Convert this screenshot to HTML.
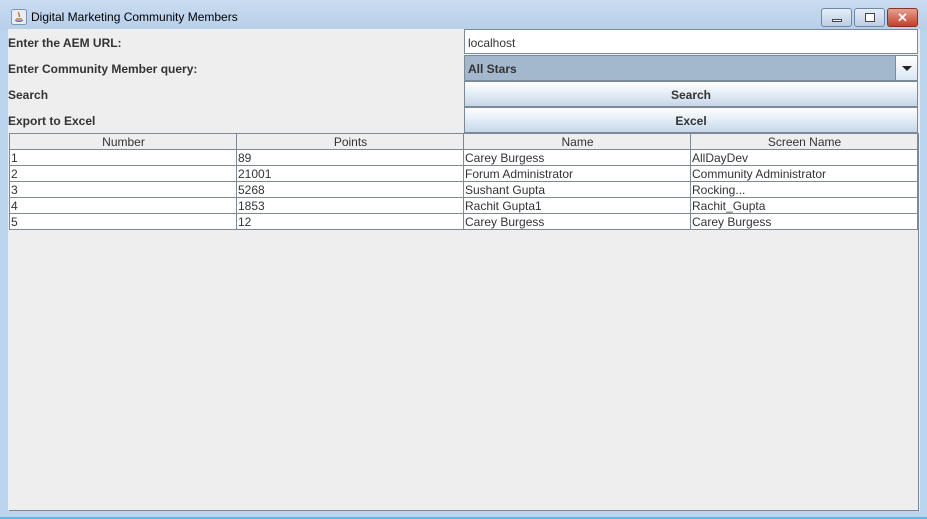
<!DOCTYPE html>
<html><head><meta charset="utf-8"><style>
*{margin:0;padding:0;box-sizing:border-box}
body{width:927px;height:519px;overflow:hidden;background:#bcd5ee;font-family:"Liberation Sans",sans-serif;position:relative}
.title{position:absolute;left:0;top:0;width:927px;height:30px;background:linear-gradient(#c9dcf0,#b7cfe9)}
.title span{position:absolute;left:31px;top:10px;font-size:12px;color:#000}
.frame{position:absolute;left:8px;top:29px;width:912px;height:482px;background:#eeeeee}
.lbl{position:absolute;left:8px;font-size:12px;font-weight:bold;color:#333}
.tf{position:absolute;left:464px;top:29px;width:454px;height:25px;background:#fff;border:1px solid #7a8a99;font-size:12px;padding:6px 0 0 3px;color:#333}
.combo{position:absolute;left:464px;top:55px;width:454px;height:26px;background:#a3b8cc;border:1px solid #7a8a99;font-size:12px;font-weight:bold;color:#333;padding:6px 0 0 3px}
.combo .arr{position:absolute;right:0;top:0;width:22px;height:24px;background:linear-gradient(#fff,#dce7f2);border-left:1px solid #7a8a99}
.combo .arr:after{content:"";position:absolute;left:6px;top:10px;border-left:5px solid transparent;border-right:5px solid transparent;border-top:5px solid #222}
.btn{position:absolute;left:464px;width:454px;height:26px;border:1px solid #7a8a99;background:linear-gradient(#fff 0%,#e8f0f8 40%,#c6d7ea 100%);font-size:12px;font-weight:bold;color:#333;text-align:center;padding-top:6px}
table{position:absolute;left:9px;top:133px;border-collapse:collapse;font-size:12px;color:#333;table-layout:fixed;width:909px}
td,th{border:1px solid #7a8a99;height:16px;padding:0 0 0 1px;white-space:nowrap;overflow:hidden;line-height:14px}
th{font-weight:normal;background:#eeeeee;text-align:center}
td{background:#fff}
.tbox{position:absolute;left:9px;top:133px;width:910px;height:378px;border-right:1px solid #7a8a99;border-bottom:1px solid #7a8a99}
.wb{position:absolute;top:8px;height:19px;border:1px solid #6f88a3;border-radius:3px;background:linear-gradient(#e4eef9,#bccee4)}
</style></head><body>
<div class="title">
<svg style="position:absolute;left:11px;top:9px" width="16" height="16"><rect x="0.5" y="0.5" width="15" height="15" rx="2" fill="#e8eef6" stroke="#7e95b0"/><path d="M8 3c-2 2 2 3 0 5M5 10h6M5 12h6" stroke="#d0641c" stroke-width="1.2" fill="none"/><path d="M4 11q4 3 8 0" stroke="#3a64a8" fill="none"/></svg>
<span>Digital Marketing Community Members</span>
<div class="wb" style="left:821px;width:31px"><div style="position:absolute;left:10px;top:10px;width:10px;height:3px;background:#fff;border:1px solid #445"></div></div>
<div class="wb" style="left:854px;width:31px"><div style="position:absolute;left:10px;top:4px;width:10px;height:9px;border:1px solid #445;background:#fff"></div></div>
<div class="wb" style="left:887px;width:31px;background:linear-gradient(#e8a090,#c2402c);border-color:#8a3020;color:#fff;font-weight:bold;font-size:13px;text-align:center;line-height:17px">✕</div>
</div>
<div class="frame"></div>
<div class="lbl" style="top:36px">Enter the AEM URL:</div>
<div class="lbl" style="top:62px">Enter Community Member query:</div>
<div class="lbl" style="top:88px">Search</div>
<div class="lbl" style="top:114px">Export to Excel</div>
<div class="tf">localhost</div>
<div class="combo">All Stars<div class="arr"></div></div>
<div class="btn" style="top:81px">Search</div>
<div class="btn" style="top:107px">Excel</div>
<div class="tbox"></div>
<table>
<tr><th>Number</th><th>Points</th><th>Name</th><th>Screen Name</th></tr>
<tr><td>1</td><td>89</td><td>Carey Burgess</td><td>AllDayDev</td></tr>
<tr><td>2</td><td>21001</td><td>Forum Administrator</td><td>Community Administrator</td></tr>
<tr><td>3</td><td>5268</td><td>Sushant Gupta</td><td>Rocking...</td></tr>
<tr><td>4</td><td>1853</td><td>Rachit Gupta1</td><td>Rachit_Gupta</td></tr>
<tr><td>5</td><td>12</td><td>Carey Burgess</td><td>Carey Burgess</td></tr>
</table>
<div style="position:absolute;left:0;top:517px;width:927px;height:2px;background:#3fc6e8"></div>
</body></html>
